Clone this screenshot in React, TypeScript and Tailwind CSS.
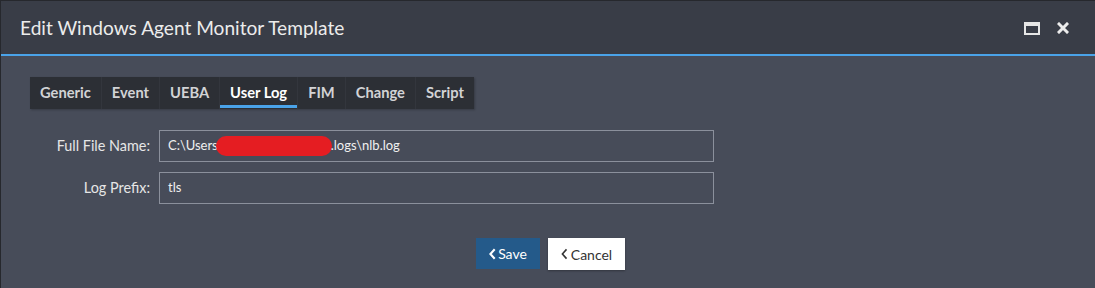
import React from "react";

const tabs = ["Generic", "Event", "UEBA", "User Log", "FIM", "Change", "Script"];

function Chevron({ className, width = 2.6 }: { className?: string; width?: number }) {
  return (
    <svg viewBox="0 0 10 14" className={className} fill="none" stroke="currentColor" strokeWidth={width} strokeLinecap="square">
      <path d="M7.5 2 L3 7 L7.5 12" />
    </svg>
  );
}

export default function App() {
  return (
    <div
      className="w-[1095px] h-[288px] flex flex-col bg-[#474c59] border-l border-t border-[#26282d] overflow-hidden"
      style={{ fontFamily: "Lato, 'Open Sans', sans-serif" }}
    >
      <div className="h-[55px] shrink-0 bg-[#393d47] flex items-center justify-between pl-[19px] pr-[26px] border-b-2 border-[#4aa3e9]">
        <div className="text-[19.1px] text-[#ececec] pt-[1px]">Edit Windows Agent Monitor Template</div>
        <div className="flex items-center gap-[17px] pt-[1px]">
          <div className="w-[16px] h-[13px] border-2 border-[#e6e6e6] border-t-[4px]" />
          <svg viewBox="0 0 12 12" className="w-[12px] h-[12px]" stroke="#ececec" strokeWidth="3" strokeLinecap="square">
            <path d="M2 2 L10 10 M10 2 L2 10" />
          </svg>
        </div>
      </div>

      <div className="flex-1 flex flex-col pt-[21px]">
        <div className="ml-[29px] self-start flex bg-[#2c2f35] h-[32px] shadow-[1px_1px_2px_rgba(0,0,0,0.25)]">
          {tabs.map((t) => {
            const active = t === "User Log";
            return (
              <div
                key={t}
                className={`relative flex items-center pb-[2px] px-[10px] text-[14.7px] font-bold border-r border-[#33363d] last:border-r-0 ${
                  active ? "text-white" : "text-[#d2d3d5]"
                }`}
              >
                {t}
                {active && <div className="absolute left-0 right-0 bottom-[1px] h-[3px] bg-[#4aa3e9]" />}
              </div>
            );
          })}
        </div>

        <div className="mt-[21px] flex flex-col gap-[10px]">
          <div className="flex items-center">
            <div className="w-[149px] text-right text-[14.4px] text-[#e6e6e6]">Full File Name:</div>
            <div className="ml-[9px] w-[555px] h-[32px] border border-[#8b909c] flex items-center pl-[8px] text-[13px] text-[#f0f0f0]">
              <span>C:\Users</span>
              <span className="inline-block w-[116px] h-[20px] rounded-[10px] bg-[#e51d22] -ml-[2px]" />
              <span className="-ml-[1px]">.logs\nlb.log</span>
            </div>
          </div>
          <div className="flex items-center">
            <div className="w-[149px] text-right text-[14.4px] text-[#e6e6e6]">Log Prefix:</div>
            <div className="ml-[9px] w-[555px] h-[32px] border border-[#8b909c] flex items-center pl-[8px] text-[13px] text-[#f0f0f0]">
              tls
            </div>
          </div>
        </div>

        <div className="mt-[34px] flex justify-center gap-[8px] pl-[4px]">
          <button className="w-[64px] h-[31px] bg-[#245a8a] text-white text-[14px] flex items-center justify-center gap-[2px]">
            <Chevron className="w-[8px] h-[12px]" />
            <span>Save</span>
          </button>
          <button className="w-[77px] h-[32px] bg-white text-[#333] text-[14px] flex items-center justify-center gap-[3px] shadow-[0_1px_2px_rgba(0,0,0,0.3)]">
            <Chevron className="w-[8px] h-[12px]" width={2} />
            <span>Cancel</span>
          </button>
        </div>
      </div>
    </div>
  );
}
